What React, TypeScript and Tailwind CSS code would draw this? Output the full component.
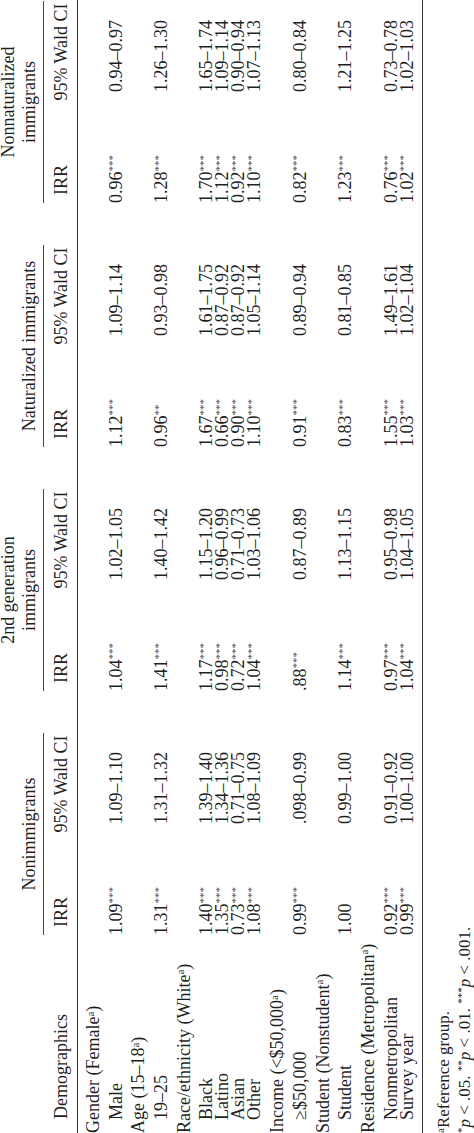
import React from 'react';

const Sup = ({ children }: { children: React.ReactNode }) => (
    <sup className="text-[11px]">{children}</sup>
);

type Row = { label: React.ReactNode; indent?: boolean; v: number; gap: string };

// v = index into the value arrays, -1 for category rows without numbers
const rows: Row[] = [
    { label: <>Gender (Female<Sup>a</Sup>)</>, v: -1, gap: 'mt-0' },
    { label: 'Male', indent: true, v: 0, gap: 'mt-[6.7px]' },
    { label: <>Age (15–18<Sup>a</Sup>)</>, v: -1, gap: 'mt-[6.7px]' },
    { label: '19–25', indent: true, v: 1, gap: 'mt-[6.7px]' },
    { label: <>Race/ethnicity (White<Sup>a</Sup>)</>, v: -1, gap: 'mt-[6.7px]' },
    { label: 'Black', indent: true, v: 2, gap: 'mt-[6.7px]' },
    { label: 'Latino', indent: true, v: 3, gap: 'mt-0' },
    { label: 'Asian', indent: true, v: 4, gap: 'mt-0' },
    { label: 'Other', indent: true, v: 5, gap: 'mt-0' },
    { label: <>Income (&lt;$50,000<Sup>a</Sup>)</>, v: -1, gap: 'mt-[6.7px]' },
    { label: '≥$50,000', indent: true, v: 6, gap: 'mt-[6.7px]' },
    { label: <>Student (Nonstudent<Sup>a</Sup>)</>, v: -1, gap: 'mt-[6.7px]' },
    { label: 'Student', indent: true, v: 7, gap: 'mt-[6.7px]' },
    { label: <>Residence (Metropolitan<Sup>a</Sup>)</>, v: -1, gap: 'mt-[6.7px]' },
    { label: 'Nonmetropolitan', indent: true, v: 8, gap: 'mt-[6.7px]' },
    { label: 'Survey year', indent: true, v: 9, gap: 'mt-0' },
];

type Group = { title: string[]; irr: string[]; ci: string[] };

const groups: Group[] = [
    {
        title: ['Nonimmigrants'],
        irr: ['1.09***', '1.31***', '1.40***', '1.35***', '0.73***', '1.08***', '0.99***', '1.00', '0.92***', '0.99***'],
        ci: ['1.09–1.10', '1.31–1.32', '1.39–1.40', '1.34–1.36', '0.71–0.75', '1.08–1.09', '.098–0.99', '0.99–1.00', '0.91–0.92', '1.00–1.00'],
    },
    {
        title: ['2nd generation', 'immigrants'],
        irr: ['1.04***', '1.41***', '1.17***', '0.98***', '0.72***', '1.04***', '.88***', '1.14***', '0.97***', '1.04***'],
        ci: ['1.02–1.05', '1.40–1.42', '1.15–1.20', '0.96–0.99', '0.71–0.73', '1.03–1.06', '0.87–0.89', '1.13–1.15', '0.95–0.98', '1.04–1.05'],
    },
    {
        title: ['Naturalized immigrants'],
        irr: ['1.12***', '0.96**', '1.67***', '0.66***', '0.90***', '1.10***', '0.91***', '0.83***', '1.55***', '1.03***'],
        ci: ['1.09–1.14', '0.93–0.98', '1.61–1.75', '0.87–0.92', '0.87–0.92', '1.05–1.14', '0.89–0.94', '0.81–0.85', '1.49–1.61', '1.02–1.04'],
    },
    {
        title: ['Nonnaturalized', 'immigrants'],
        irr: ['0.96***', '1.28***', '1.70***', '1.12***', '0.92***', '1.10***', '0.82***', '1.23***', '0.76***', '1.02***'],
        ci: ['0.94–0.97', '1.26–1.30', '1.65–1.74', '1.09–1.14', '0.90–0.94', '1.07–1.13', '0.80–0.84', '1.21–1.25', '0.73–0.78', '1.02–1.03'],
    },
];

function Irr({ value }: { value: string }) {
    const stars = value.match(/\*+$/)?.[0] ?? '';
    const num = value.slice(0, value.length - stars.length);
    return (
        <>
            {num}
            {stars && <sup className="text-[11px] text-[#555]">{stars}</sup>}
        </>
    );
}

export default function App() {
    return (
        <div className="w-[474px] h-[1133px] overflow-hidden bg-white">
            {/* the table is set in landscape and turned a quarter turn, as in the scanned page */}
            <div className="w-[1133px] h-[474px] origin-top-left [transform:translateY(1133px)_rotate(-90deg)] font-['Liberation_Serif','Times_New_Roman',serif] text-[18px] text-[#1f1f1f]">
                {/* header */}
                <div className="flex h-[78px] border-b border-[#333]">
                    <div className="w-[198px] flex items-end pb-[5px] pl-[14px] leading-[22px]">Demographics</div>
                    <div className="flex gap-[42px]">
                        {groups.map((g) => (
                            <div key={g.title.join(' ')} className="w-[202px] flex flex-col">
                                <div className="h-[44px] border-b border-[#444] flex flex-col items-center justify-end pb-[3px] leading-[21px]">
                                    {g.title.map((line) => (
                                        <span key={line}>{line}</span>
                                    ))}
                                </div>
                                <div className="flex pt-[6px] leading-[22px]">
                                    <div className="w-[100px] pl-[8px]">IRR</div>
                                    <div className="w-[102px] text-center">95% Wald CI</div>
                                </div>
                            </div>
                        ))}
                    </div>
                </div>

                {/* body */}
                <div className="flex flex-col h-[345px] pt-[7px] border-b border-[#333]">
                    {rows.map((r, i) => (
                        <div key={i} className={`flex h-[16px] leading-[16px] whitespace-nowrap ${r.gap}`}>
                            <div className={`w-[198px] ${r.indent ? 'pl-[13px]' : 'pl-0'}`}>{r.label}</div>
                            {r.v >= 0 && (
                                <div className="flex gap-[42px]">
                                    {groups.map((g) => (
                                        <div key={g.title.join(' ')} className="w-[202px] flex">
                                            <div className="w-[100px]">
                                                <Irr value={g.irr[r.v]} />
                                            </div>
                                            <div className="w-[102px] pl-[11px]">{g.ci[r.v]}</div>
                                        </div>
                                    ))}
                                </div>
                            )}
                        </div>
                    ))}
                </div>

                {/* footnotes */}
                <div className="pt-[10px] leading-[21px] text-[17px]">
                    <div>
                        <sup className="text-[11px]">a</sup>Reference group.
                    </div>
                    <div>
                        <sup className="text-[11px]">*</sup>
                        <i>p</i> &lt; .05. <sup className="text-[11px]">**</sup>
                        <i>p</i> &lt; .01. <sup className="text-[11px]">***</sup>
                        <i>p</i> &lt; .001.
                    </div>
                </div>
            </div>
        </div>
    );
}
